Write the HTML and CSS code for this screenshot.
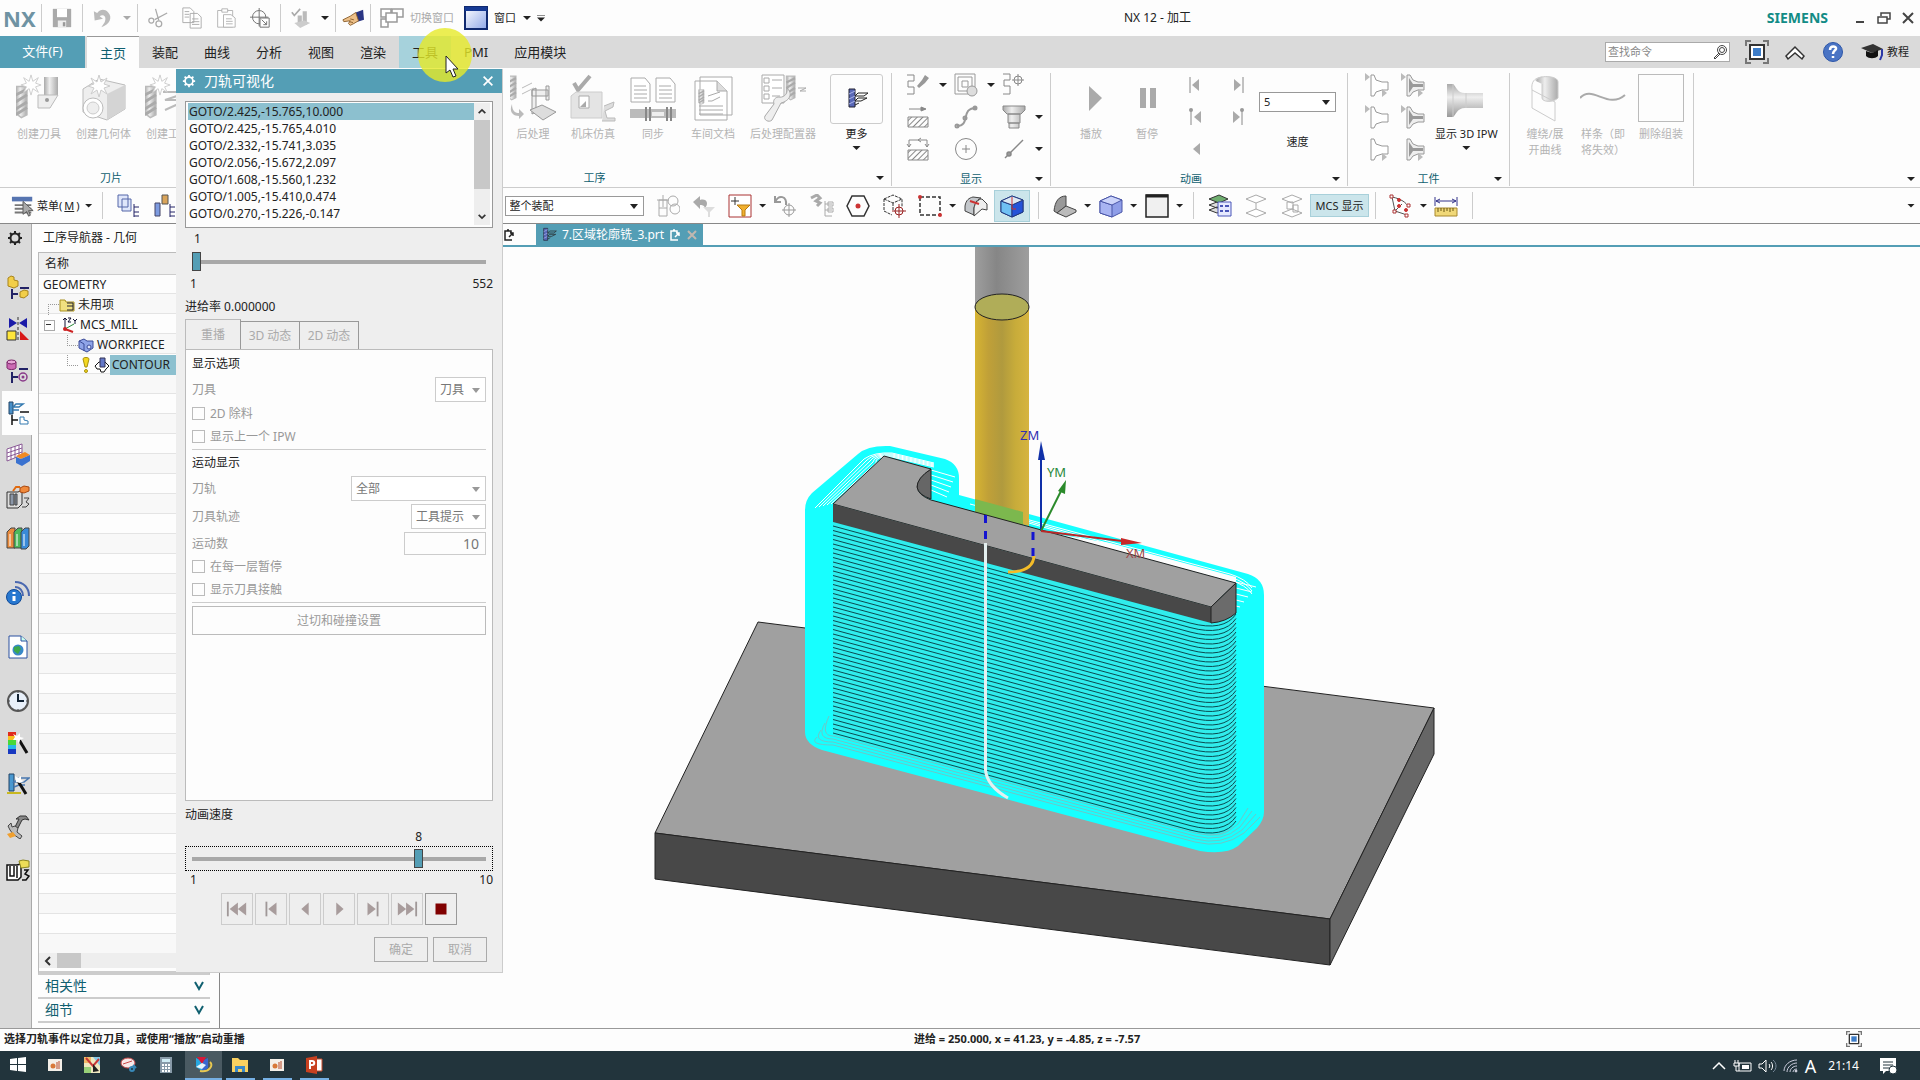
FILE: index.html
```html
<!DOCTYPE html>
<html lang="zh-CN">
<head>
    <meta charset="UTF-8">
    <meta name="viewport" content="width=device-width, initial-scale=1.0">
    <title>NX 12 - 加工</title>
    <link rel="stylesheet" href="styles.css">
</head>
<body>
    <!-- shared symbols -->
    <svg class="defs" aria-hidden="true">
        <defs>
            <linearGradient id="gMetal" x1="0" x2="1" y1="0" y2="0"><stop offset="0" stop-color="#aaa"/><stop offset=".4" stop-color="#eee"/><stop offset="1" stop-color="#aaa"/></linearGradient>
            <linearGradient id="gMetalV" x1="0" x2="0" y1="0" y2="1"><stop offset="0" stop-color="#aaa"/><stop offset=".4" stop-color="#eee"/><stop offset="1" stop-color="#999"/></linearGradient>
            <linearGradient id="gBlue" x1="0" x2="1" y1="0" y2="1"><stop offset="0" stop-color="#fff"/><stop offset="1" stop-color="#8fa8e8"/></linearGradient>
            <pattern id="hatch" width="4" height="4" patternUnits="userSpaceOnUse" patternTransform="rotate(45)"><path d="M0 0V4" stroke="#888" stroke-width="2"/></pattern>
        </defs>
        <symbol id="part" viewBox="0 0 24 24"><path d="M3 2h3l2 5 6 2h6v8h-6l-6 2-2 4H3z" fill="#fff" stroke="#999"/></symbol>
        <symbol id="partFill" viewBox="0 0 24 24"><path d="M3 2h3l3 5 5 2h6v8h-6l-5 2-3 4H3z" fill="#eee" stroke="#999"/><path d="M5 5l4 6h10v3H9l-4 6z" fill="#999"/></symbol>
        <symbol id="mark" viewBox="0 0 24 24"><path d="M0 0l5 4-5 4z" fill="#bbb"/></symbol>
        <symbol id="cutter" viewBox="0 0 24 24"><path d="M4 2h6v18H4z" fill="#5968b8" stroke="#223"/><path d="M4 7l6-3M4 12l6-3M4 17l6-3" stroke="#aab4ea"/><path d="M10 9l3-3h10l-4 3h-9M10 14l3-3h9l-6 3h-6M10 18l4-2" fill="none" stroke="#222"/></symbol>
        <symbol id="mill" viewBox="0 0 24 24"><path d="M4 1h8v20l-4 2-4-3z" fill="url(#gMetal)" stroke="#bbb"/><path d="M4 7l8-4M4 12l8-5M4 17l8-5M4 21l8-5" stroke="#aaa" stroke-width="2"/></symbol>
        <symbol id="burst" viewBox="0 0 24 24"><path d="M12 1l2 7 6-4-3 6 6 2-6 2 3 6-6-4-2 7-2-7-6 4 3-6-6-2 6-2-3-6 6 4z" fill="#fff" stroke="#ccc"/></symbol>
        <symbol id="gear" viewBox="0 0 16 16"><circle cx="8" cy="8" r="4.500" fill="none" stroke="currentColor" stroke-width="2"/><path d="M8 1v3M8 12v3M1 8h3M12 8h3M3 3l2 2M11 11l2 2M13 3l-2 2M5 11l-2 2" stroke="currentColor" stroke-width="2"/></symbol>
        <symbol id="fit" viewBox="0 0 24 24"><path d="M1 6V1h5M18 1h5v5M23 18v5h-5M6 23H1v-5" fill="none" stroke="#777" stroke-width="2"/><path d="M5 5h14v14H5z" fill="#fff" stroke="#333" stroke-width="2"/><path d="M8 8h8v8H8z" fill="#3c7cc8"/></symbol>
        <symbol id="detach" viewBox="0 0 12 14"><path d="M8 5V3H2v9h7M4 2h2M6 9l4-4M7 5h3v3" fill="none" stroke="currentColor" stroke-width="1.500"/></symbol>
    </svg>

    <header class="titlebar">
        <span class="nx">NX</span>
        <span class="sep"></span>
        <button aria-label="保存"><svg viewBox="0 0 24 24"><path d="M1 1h22v22H1z" fill="#aaa"/><path d="M6 1h12v10H6z" fill="#fff"/><path d="M7 15h10v8H7z" fill="#eee"/><path d="M13 17h3v5h-3z" fill="#999"/></svg></button>
        <span class="sep"></span>
        <button aria-label="撤消"><svg viewBox="0 0 24 24"><path d="M1 4l1 11 10-2-4-3c4-3 9 0 6 7l-4 6c10-3 14-12 8-18-4-4-9-4-13 1z" fill="#bbb"/></svg></button>
        <i class="dd grey"></i>
        <span class="sep"></span>
        <button aria-label="剪切"><svg viewBox="0 0 24 24" fill="none" stroke="#aaa" stroke-width="1.500"><path d="M9 1l4 14M23 6L8 14"/><circle cx="4" cy="15" r="3"/><circle cx="13" cy="19" r="3.500"/></svg></button>
        <button class="wide" aria-label="复制"><svg viewBox="0 0 24 24" fill="#fff" stroke="#aaa"><path d="M2 1h8l4 4v12H2zM10 7h8l4 4v12H10z"/><path d="M4 5h5M4 8h5M4 11h5M12 13h7M12 16h8M12 19h8"/></svg></button>
        <button aria-label="粘贴"><svg viewBox="0 0 24 24" fill="#fff" stroke="#aaa"><path d="M2 3h18v20H2z"/><path d="M7 1h7v4H7zM9 8h9l5 4v11H9z"/><path d="M12 13h7M12 16h8M12 19h8"/></svg></button>
        <button aria-label="定向"><svg viewBox="0 0 24 24" fill="none" stroke="#777" stroke-width="1.200"><circle cx="11" cy="11" r="8"/><path d="M11 0v22M0 11h22"/><path d="M12 12h11v11H12z" fill="#fff"/><path d="M14 14l6 6M20 16v4h-4"/></svg></button>
        <span class="sep"></span>
        <button aria-label="完成"><svg viewBox="0 0 24 24"><path d="M1 5l3 4 7-8" fill="none" stroke="#aaa" stroke-width="2"/><path d="M8 9h5v12H8zM14 4h5v16h-5z" fill="#bbb"/><path d="M4 18l12-3 7 3-12 6z" fill="#ccc"/></svg></button>
        <i class="dd"></i>
        <span class="sep"></span>
        <button class="hand" aria-label="触控"><svg viewBox="0 0 24 24"><path d="M15 6l8-3 1 11-7 2z" fill="#2a3584"/><path d="M1 14l8-4 6-4 3 9-5 3-4 2-2-2 2-3-7 1z" fill="#edc088" stroke="#8a5e2c"/><path d="M9 13l4 1M8 16l4 1" stroke="#8a5e2c"/></svg></button>
        <span class="sep"></span>
        <button class="text grey"><svg viewBox="0 0 24 24" fill="#fff" stroke="#999" stroke-width="1.500"><path d="M1 3h10v8H1zM1 13h7v8H1z"/><path d="M12 3h11v8H12z"/><path d="M6 7h11v9H6z"/></svg>切换窗口</button>
        <button class="text"><svg viewBox="0 0 24 24"><path d="M1 1h22v22H1z" fill="url(#gBlue)" stroke="#102a70" stroke-width="2"/><path d="M1 1h22v4H1z" fill="#163a94"/></svg>窗口</button>
        <i class="dd"></i>
        <i class="dd bar"></i>
        <h1>NX 12 - 加工</h1>
        <span class="siemens">SIEMENS</span>
        <button class="win" aria-label="最小化"><svg viewBox="0 0 16 16"><path d="M4 12h8" stroke="#444" stroke-width="2"/></svg></button>
        <button class="win" aria-label="还原"><svg viewBox="0 0 16 16" fill="none" stroke="#444" stroke-width="1.500"><path d="M5 6V3h9v6h-3M2 7h9v6H2z"/></svg></button>
        <button class="win" aria-label="关闭"><svg viewBox="0 0 16 16"><path d="M3 3l10 10M13 3L3 13" stroke="#444" stroke-width="2"/></svg></button>
    </header>

    <nav class="tabs">
        <a class="file" href="#">文件(F)</a>
        <a class="active" href="#">主页</a>
        <a href="#">装配</a>
        <a href="#">曲线</a>
        <a href="#">分析</a>
        <a href="#">视图</a>
        <a href="#">渲染</a>
        <a class="hover" href="#">工具</a>
        <a href="#">PMI</a>
        <a href="#">应用模块</a>
        <label class="search">
            <input type="text" placeholder="查找命令" aria-label="查找命令">
            <svg viewBox="0 0 16 16" fill="none" stroke="#444"><circle cx="10" cy="6" r="4.500"/><circle cx="10" cy="6" r="2.500"/><path d="M7 9l-5 5 1 1 5-5"/></svg>
        </label>
        <button aria-label="全屏"><svg viewBox="0 0 24 24"><use href="#fit"/></svg></button>
        <button aria-label="收起功能区"><svg viewBox="0 0 24 24"><path d="M3 16l9-9 9 9-2 3-7-6-7 6z" fill="#fff" stroke="#333" stroke-width="1.500"/></svg></button>
        <button aria-label="帮助"><svg viewBox="0 0 24 24"><circle cx="12" cy="12" r="9.500" fill="#4a74c4" stroke="#2d56a8"/><path d="M9 10c0-5 7-4 6-1-1 2-3 2-3 5M12 16v2" fill="none" stroke="#fff" stroke-width="2.500"/></svg></button>
        <button class="tutor"><svg viewBox="0 0 24 24"><path d="M1 8l12-4 10 5-11 4z" fill="#333"/><path d="M6 11v5c3 3 9 3 12 0v-6l-6 3z" fill="#111"/><path d="M22 9v6l-2 5" fill="none" stroke="#2b38a8" stroke-width="2"/></svg>教程</button>
    </nav>

    <section class="ribbon">
        <div class="group insert">
            <div class="items">
                <button class="big" disabled><svg viewBox="0 0 46 48"><path d="M28 3h14v18H28z" fill="url(#gMetal)"/><path d="M22 21h20l-8 13H22z" fill="#eee" stroke="#bbb"/><circle cx="31" cy="26" r="2" fill="#999"/><use href="#mill" x="-6" y="10" width="34" height="36"/><use href="#burst" x="2" y="0" width="26" height="22"/></svg>创建刀具</button>
                <button class="big" disabled><svg viewBox="0 0 46 48"><path d="M2 15l16-10 26 6v24L26 46 2 38z" fill="#eee" stroke="#bbb"/><path d="M26 20l18-9v24L26 46z" fill="#d4d4d4"/><circle cx="12" cy="34" r="10" fill="#fff" stroke="#bbb"/><circle cx="12" cy="34" r="6" fill="#eee" stroke="#ccc"/><use href="#burst" x="4" y="0" width="28" height="24"/></svg>创建几何体</button>
                <button class="big" disabled><svg viewBox="0 0 46 48"><use href="#mill" x="-6" y="10" width="34" height="36"/><path d="M18 18h26l-24 8h22l-22 10" fill="none" stroke="#bbb" stroke-width="2"/><use href="#burst" x="2" y="0" width="26" height="22"/></svg>创建工序</button>
            </div>
            <div class="foot"><span>刀片</span></div>
        </div>
        <div class="group operation">
            <div class="items">
                <button class="big" disabled><svg viewBox="0 0 46 48"><use href="#mill" x="-7" y="0" width="26" height="28"/><path d="M12 14l10-5M12 20l12-6" stroke="#bbb"/><path d="M22 16l4-2v24l-4 2zM22 16h16v6H22zM36 12h3v14h-3z" fill="#eee" stroke="#999"/><path d="M20 36l12-5 14 7-13 8z" fill="#ddd" stroke="#999"/><path d="M2 30c0 8 4 9 7 9v-4l5 5-5 5v-3c-7 0-10-5-7-12z" fill="#bbb"/></svg>后处理</button>
                <button class="big" disabled><svg viewBox="0 0 46 48"><path d="M4 9l4 7L20 2" fill="none" stroke="#aaa" stroke-width="4"/><path d="M1 22l5-4h26v26H1z" fill="#e4e4e4" stroke="#ccc"/><path d="M9 22h10v12H9z" fill="#fff" stroke="#aaa"/><path d="M10 33l6-6v6z" fill="#aaa"/><path d="M34 32l10-4-1 5-8 4 2 7h8v3H32" fill="#ddd" stroke="#bbb"/></svg>机床仿真</button>
                <button class="big" disabled><svg viewBox="0 0 46 48" fill="#fff" stroke="#aaa"><path d="M1 4h14l5 6v18H1zM26 4h14l5 6v18H26z"/><path d="M4 12h12M4 16h13M4 20h13M4 24h13M29 12h12M29 16h13M29 20h13M29 24h13"/><path d="M0 35h46v9H0z" fill="#bbb" stroke="none"/><path d="M16 33v14M20 33v14M37 33v14M41 33v14" stroke="#888" stroke-width="2"/><path d="M22 38h12v4H22z" fill="#eee" stroke="none"/></svg>同步</button>
                <button class="big" disabled><svg viewBox="0 0 46 48" fill="#fff" stroke="#aaa"><path d="M10 3h32v38H10zM5 7h22l10 10v29H5z"/><path d="M27 7v10h10" fill="#ddd"/><use href="#mill" x="6" y="13" width="16" height="20"/><path d="M18 22l12-4M18 27h4l8-4M9 32h24M9 36h24M9 40h24"/></svg>车间文档</button>
                <button class="big" disabled><svg viewBox="0 0 46 48" fill="#fff" stroke="#aaa"><path d="M2 1h22v28H2zM4 4h5v5H4zM4 12h5v5H4zM4 20h5v5H4zM12 6h10M12 14h10M12 22h8"/><use href="#mill" x="22" y="0" width="26" height="28"/><path d="M38 14h8l-6 3h6"/><path d="M18 23c5 1 10-2 9-9 8 8-1 14-6 15L12 46c-3 3-9 0-7-4l9-12c-1-3 0-6 4-7z" fill="#eee"/></svg>后处理配置器</button>
                <button class="big more"><span class="box"><svg viewBox="0 0 24 24"><use href="#cutter"/></svg></span>更多<i class="dd"></i></button>
            </div>
            <div class="foot"><span>工序</span><i class="dd"></i></div>
        </div>
        <div class="group display">
            <div class="items grid3">
                <button aria-label="编辑显示"><svg viewBox="0 0 24 24"><path d="M1 2h7v6H2v6h6v7H1" fill="none" stroke="#888"/><path d="M11 13l5-6 3-5 4 3-4 5-6 5z" fill="#999"/></svg><i class="dd"></i></button>
                <button aria-label="颜色"><svg viewBox="0 0 24 24" fill="none" stroke="#999"><path d="M1 1h20v20H1zM4 4h14v14H4zM8 8h6v6H8z"/><circle cx="18" cy="18" r="5" fill="#ddd"/></svg><i class="dd"></i></button>
                <button aria-label="刀轨点"><svg viewBox="0 0 24 24" fill="none" stroke="#888"><path d="M1 1h7v6H2v6h6v8H1"/><circle cx="16" cy="7" r="4"/><path d="M16 1v12M10 7h12"/></svg></button>
                <button aria-label="切削"><svg viewBox="0 0 24 24" stroke="#888"><path d="M2 12h20v10H2z" fill="url(#hatch)"/><path d="M3 4h16M15 2l5 2-5 2z" fill="#888"/></svg></button>
                <button aria-label="样条"><svg viewBox="0 0 24 24" fill="none" stroke="#999" stroke-width="2"><path d="M3 21c14 0 3-18 19-18"/><circle cx="3" cy="21" r="1.500"/><circle cx="11" cy="13" r="1.500"/><circle cx="21" cy="3" r="1.500"/></svg></button>
                <button aria-label="夹持器"><svg viewBox="0 0 24 24" stroke="#888" fill="url(#gMetal)"><path d="M1 1h22v4l-4 4H5L1 5zM6 9h12v9H6zM7 18h10v5H7z"/></svg><i class="dd"></i></button>
                <button aria-label="移刀"><svg viewBox="0 0 24 24" stroke="#888"><path d="M2 13h20v10H2z" fill="url(#hatch)"/><path d="M3 10V3h18v7M1 7l2 3 2-3M19 7l2 3 2-3M15 1l-3 2 3 2" fill="none"/></svg></button>
                <button aria-label="圆心"><svg viewBox="0 0 24 24" fill="none" stroke="#888"><circle cx="12" cy="12" r="10.500"/><path d="M12 8v8M8 12h8"/></svg></button>
                <button aria-label="直线"><svg viewBox="0 0 24 24" stroke="#888" stroke-width="1.500"><path d="M3 21L21 3"/><circle cx="7" cy="17" r="2" fill="#999"/></svg><i class="dd"></i></button>
            </div>
            <div class="foot"><span>显示</span><i class="dd"></i></div>
        </div>
        <div class="group animate">
            <div class="items">
                <button class="big mid" disabled><svg viewBox="0 0 46 48"><path d="M21 12l13 12-13 13z" fill="#aaa"/></svg>播放</button>
                <button class="big mid" disabled><svg viewBox="0 0 46 48"><path d="M16 14h6v20h-6zM26 14h6v20h-6z" fill="#aaa"/></svg>暂停</button>
                <div class="grid2">
                    <button aria-label="首步"><svg viewBox="0 0 24 24"><path d="M6 4v16" stroke="#888"/><path d="M15 6v12l-7-6z" fill="#aaa"/></svg></button>
                    <button aria-label="末步"><svg viewBox="0 0 24 24"><path d="M17 4v16" stroke="#888"/><path d="M8 6v12l7-6z" fill="#aaa"/></svg></button>
                    <button aria-label="上一工序"><svg viewBox="0 0 24 24"><path d="M7 4v16" stroke="#888"/><circle cx="7" cy="5" r="2" fill="#999"/><path d="M17 6v12l-7-6z" fill="#aaa"/></svg></button>
                    <button aria-label="下一工序"><svg viewBox="0 0 24 24"><path d="M16 4v16" stroke="#888"/><circle cx="16" cy="5" r="2" fill="#999"/><path d="M7 6v12l7-6z" fill="#aaa"/></svg></button>
                    <button aria-label="后退"><svg viewBox="0 0 24 24"><path d="M16 6v12l-7-6z" fill="#aaa"/></svg></button>
                </div>
                <div class="speed">
                    <span class="pick"><select id="speed"><option>5</option></select></span>
                    <label for="speed">速度</label>
                </div>
            </div>
            <div class="foot"><span>动画</span><i class="dd"></i></div>
        </div>
        <div class="group piece">
            <div class="items">
                <div class="grid2 narrow">
                    <button aria-label="工件一"><svg viewBox="0 0 24 24"><use href="#part" x="3"/><use href="#mark"/><use href="#mark" x="17" y="16"/></svg></button>
                    <button aria-label="工件二"><svg viewBox="0 0 24 24"><use href="#partFill" x="3"/><use href="#mark"/><use href="#mark" x="17" y="16"/></svg></button>
                    <button aria-label="工件三"><svg viewBox="0 0 24 24"><use href="#part" x="3"/><use href="#mark"/></svg></button>
                    <button aria-label="工件四"><svg viewBox="0 0 24 24"><use href="#partFill" x="3"/><use href="#mark"/></svg></button>
                    <button aria-label="工件五"><svg viewBox="0 0 24 24"><use href="#part" x="3"/><use href="#mark" x="17" y="16"/></svg></button>
                    <button aria-label="工件六"><svg viewBox="0 0 24 24"><use href="#partFill" x="3"/><use href="#mark" x="17" y="16"/></svg></button>
                </div>
                <button class="big ipw"><svg viewBox="0 0 46 48" fill="url(#gMetalV)"><path d="M4 10h6c3 2 4 9 12 9h18v15H22c-8 0-9 7-12 9H4z"/><path d="M10 10v33M23 19v15" stroke="#ccc"/></svg>显示 3D IPW<i class="dd"></i></button>
            </div>
            <div class="foot"><span>工件</span><i class="dd"></i></div>
        </div>
        <div class="group curves">
            <div class="items">
                <button class="big" disabled><svg viewBox="0 0 46 48" stroke="#ccc"><path d="M14 7c0-6 22-6 22 1v16c-5 5-16 4-16 0V10" fill="url(#gMetal)"/><path d="M20 3c-8 1-11 5-10 13v18l23 13V28L10 16" fill="none"/></svg>缠绕/展<br>开曲线</button>
                <button class="big" disabled><svg viewBox="0 0 46 48"><path d="M0 24C12 10 28 36 45 21" fill="none" stroke="#aaa" stroke-width="2"/></svg>样条（即<br>将失效）</button>
                <button class="big" disabled><span class="blank"></span>删除组装</button>
            </div>
        </div>
        <i class="dd last"></i>
    </section>

    <section class="toolbar">
        <button class="menu"><svg viewBox="0 0 26 24"><path d="M1 2h22v5H1z" fill="#5674b0"/><path d="M4 11h18M4 15h18M4 19h18" stroke="#777" stroke-width="2"/><path d="M13 7v14l4-3 2 5 2-1-2-5h5z" fill="#aaa" stroke="#555"/></svg>菜单(<u>M</u>)</button>
        <i class="dd"></i>
        <span class="sep"></span>
        <button aria-label="程序顺序视图"><svg viewBox="0 0 24 24" fill="#dfe6fa" stroke="#5566a8"><path d="M1 1h10v12H1zM5 5h9v12H5z"/><path d="M17 10v13M17 13h5M17 18h5M17 22h5" stroke="#226"/></svg></button>
        <button aria-label="机床视图"><svg viewBox="0 0 24 24"><path d="M9 1h6v9H9z" fill="#d9a45a" stroke="#555"/><path d="M2 9h5v13H2z" fill="#7d9be0" stroke="#446"/><path d="M17 10v13M17 13h5M17 18h5M17 22h5" stroke="#226" fill="none"/></svg></button>
        <span class="covered"></span>
        <span class="pick scope"><select aria-label="选择范围"><option>整个装配</option></select></span>
        <button aria-label="装配内"><svg viewBox="0 0 24 24" fill="none" stroke="#aaa"><path d="M3 6h8v16H3zM3 14h8M7 1v12M1 6h12"/><circle cx="17" cy="7" r="5"/><circle cx="19" cy="15" r="5"/></svg></button>
        <button aria-label="重置过滤器"><svg viewBox="0 0 24 24"><path d="M1 8l7-6v4c7-2 9 4 5 8-1-3-3-3-5-3v4z" fill="#aaa"/><path d="M11 13h12l-5 5v5h-2v-5z" fill="#ddd"/></svg></button>
        <button aria-label="过滤器"><svg viewBox="0 0 24 24"><path d="M1 1h22v22H1z" fill="#fff" stroke="#a33"/><path d="M7 3v8M3 7h8" stroke="#333"/><path d="M9 11h13l-5 5v6h-3v-6z" fill="#f0b030" stroke="#b87a10"/></svg></button>
        <i class="dd"></i>
        <button aria-label="恢复点"><svg viewBox="0 0 24 24" fill="none" stroke="#999"><path d="M1 2v6h6M1 8c4-8 12-6 11 3" stroke-width="2"/><circle cx="15" cy="16" r="5"/><path d="M15 9v14M8 16h14"/></svg></button>
        <button aria-label="层次"><svg viewBox="0 0 24 24"><path d="M1 4l6-3 3 3-4 3 4 2-3 3" fill="none" stroke="#aaa" stroke-width="3"/><path d="M15 7v15M15 10h7M15 16h7M15 22h7M18 8h5v4h-5zM18 14h5v4h-5z" fill="#fff" stroke="#aaa"/></svg></button>
        <button aria-label="多边形"><svg viewBox="0 0 24 24"><path d="M6 2h12l5 10-5 10H6L1 12z" fill="none" stroke="#333" stroke-width="1.500"/><circle cx="12" cy="12" r="2.500" fill="#c33"/></svg></button>
        <button aria-label="体中心"><svg viewBox="0 0 24 24" fill="none"><path d="M2 5l9-4 9 4v8M2 5v12l8 4M2 5l9 4 9-4M11 9v8" stroke="#333" stroke-dasharray="3 1"/><circle cx="17" cy="17" r="4" stroke="#922"/><path d="M17 10v14M10 17h14" stroke="#922"/></svg></button>
        <button aria-label="矩形选择"><svg viewBox="0 0 24 24"><path d="M2 3h20v18H2z" fill="none" stroke="#333" stroke-width="1.500" stroke-dasharray="4 2"/><circle cx="2" cy="3" r="2" fill="#c33"/><circle cx="22" cy="21" r="2" fill="#c33"/></svg></button>
        <i class="dd"></i>
        <button aria-label="面规则"><svg viewBox="0 0 24 24" stroke="#444"><path d="M1 12c1-6 4-8 8-9l8 1c-5 2-6 6-7 10v7l-9-4z" fill="#c4c8cc"/><path d="M10 14c1-5 4-9 8-9l5 5v6l-5-1-8 7z" fill="#eee"/><path d="M6 7l9 3" stroke="#c33" stroke-width="2"/></svg></button>
        <button class="on" aria-label="着色"><svg viewBox="0 0 24 24" stroke="#223a80"><path d="M1 7l11-5 11 4v12l-11 5-11-5z" fill="#5b9cf0"/><path d="M1 7l11 4v12L1 18z" fill="#6fc0f4"/><path d="M12 11l11-5v12l-11 5z" fill="#2453d8"/><path d="M1 7l11-5 11 4-11 5z" fill="#dce8f4"/><path d="M12 3v12h4" fill="none" stroke="#c33"/></svg></button>
        <span class="sep"></span>
        <button aria-label="截面"><svg viewBox="0 0 24 24" stroke="#444"><path d="M1 17C2 7 6 2 13 2v10l-9 7z" fill="#999"/><path d="M4 19l9-7 10 4v2l-10 5z" fill="#bbb"/></svg></button>
        <i class="dd"></i>
        <button aria-label="渲染样式"><svg viewBox="0 0 24 24" stroke="#4a56a8"><path d="M1 7l11-5 11 4v12l-10 5-12-4z" fill="#8f9ee8"/><path d="M1 7l12 4v12L1 19z" fill="#a8b4f2"/><path d="M1 7l11-5 11 4-10 5z" fill="#ccd4fa"/></svg></button>
        <i class="dd"></i>
        <button aria-label="背景"><svg viewBox="0 0 24 24"><path d="M1 1h22v22H1z" fill="#f0f0f0" stroke="#222" stroke-width="1.500"/><path d="M1 2h22" stroke="#222" stroke-width="3"/></svg></button>
        <i class="dd"></i>
        <span class="sep"></span>
        <button aria-label="图层设置"><svg viewBox="0 0 24 24" stroke="#333"><path d="M1 16l8-3 8 3-8 3zM1 11l8-3 8 3-8 3z" fill="#ddd"/><path d="M1 5l10-4 9 4-9 4z" fill="#6fae6f"/><path d="M10 8h13v14H10z" fill="#e6eaff" stroke="#4a56b8"/><path d="M12 12h3M17 12h4M12 17h3M17 17h4" stroke="#4a56b8" stroke-width="2"/></svg></button>
        <button aria-label="图层视图"><svg viewBox="0 0 24 24" fill="#fff" stroke="#aaa"><path d="M2 5l10-4 10 4-10 4zM2 19l10-4 10 4-10 4zM12 9v6"/></svg></button>
        <button aria-label="移动至图层"><svg viewBox="0 0 24 24" fill="#fff" stroke="#aaa"><path d="M2 5l10-4 10 4-10 4zM2 19l10-4 10 4-10 4zM7 8h6v7H7zM13 11h5v7h-5z"/></svg></button>
        <button class="mcs">MCS 显示</button>
        <span class="sep"></span>
        <button aria-label="编辑点"><svg viewBox="0 0 24 24" fill="none" stroke="#c33"><path d="M4 3c10 2 14 6 16 9M4 3l3 14 12 4M7 17l7-7" stroke="#555"/><g fill="#fff" stroke="#a33"><path d="M2 1h3v3H2zM5 16h3v3H5zM19 10h3v3h-3zM17 20h3v3h-3z"/></g><g fill="#c33"><circle cx="11" cy="6" r="1.500"/><circle cx="11" cy="12" r="1.500"/><circle cx="18" cy="16" r="1.500"/></g></svg></button>
        <i class="dd"></i>
        <button aria-label="测量"><svg viewBox="0 0 24 24"><path d="M1 3v9M23 3v9M2 7h20M6 5L2 7l4 2M18 5l4 2-4 2" fill="none" stroke="#33338a"/><path d="M1 14h22v8H1z" fill="#f0d878" stroke="#a8882c"/><path d="M4 14v4M7 14v3M10 14v4M13 14v3M16 14v4M19 14v3" stroke="#665510"/></svg></button>
        <span class="sep"></span>
        <i class="dd last"></i>
    </section>

    <main>
        <aside class="resbar">
            <button class="gear" aria-label="资源条选项"><svg viewBox="0 0 16 16"><use href="#gear"/></svg></button>
            <button class="spaced" aria-label="装配导航器"><svg viewBox="0 0 24 24"><path d="M2 3l3-2 3 1v3l4 1v5l-4 2-6-2z" fill="#f2ce48" stroke="#a8841c"/><path d="M14 17l4-2 4 1v4l-4 3-4-1z" fill="#f2ce48" stroke="#a8841c"/><path d="M6 14v10M6 19h6M14 13h9" stroke="#226" stroke-width="2"/></svg></button>
            <button aria-label="约束导航器"><svg viewBox="0 0 24 24"><path d="M3 1v10l8-5zM21 1v10l-8-5z" fill="#1b1ba8"/><path d="M1 14h9v9H1z" fill="#ffe63c" stroke="#333"/><path d="M14 14l9 9h-9z" fill="#d81818"/><path d="M12 0v24" stroke="#333" stroke-dasharray="3 2"/></svg></button>
            <button aria-label="部件导航器"><svg viewBox="0 0 24 24"><path d="M1 3v6c1 2 8 2 9 0V3z" fill="#cc6ab4" stroke="#7a2468"/><ellipse cx="5.500" cy="3" rx="4.500" ry="2" fill="#e8a8d8" stroke="#7a2468"/><path d="M6 13v11M6 18h6M13 10h9" stroke="#226" stroke-width="2"/><circle cx="17" cy="18" r="4" fill="none" stroke="#8a3a8a" stroke-width="1.500"/><circle cx="17" cy="18" r="1.500" fill="#8a3a8a"/></svg></button>
            <button class="current" aria-label="工序导航器"><svg viewBox="0 0 24 24"><path d="M3 1h4v12H3z" fill="#4a90c8" stroke="#246"/><path d="M7 6l3-3h7l-4 3zM7 9h6" stroke="#357ab0" fill="none" stroke-width="1.500"/><path d="M6 14v10M6 19h6M14 11h9" stroke="#111" stroke-width="1.500"/><path d="M14 16h4v3l4 1v3h-8z" fill="#fff" stroke="#357ab0"/></svg></button>
            <button aria-label="机床导航器"><svg viewBox="0 0 24 24"><path d="M1 6l15-5v11L1 18zM1 10l15-5M1 14l15-5M5 5v12M9 3v12M13 2v11" fill="#fff" stroke="#8a5a96"/><path d="M10 13l9-4 5 3-9 4z" fill="#f08a24"/><path d="M10 14l5 2 9-4v6l-8 5-6-3z" fill="#3a72d0"/></svg></button>
            <button aria-label="加工特征导航器"><svg viewBox="0 0 24 24"><path d="M1 7h11l4-2v14l-4 4H1z" fill="#ddd" stroke="#333"/><path d="M4 9h4v11H4zM9 9h2v11H9z" fill="#8a96a8" stroke="#444"/><path d="M14 3l4-2 5 1v4l-5 2-4-1z" fill="#f08a3c" stroke="#a84810"/><path d="M7 6l3-4h4" fill="none" stroke="#e06a10" stroke-width="2"/><path d="M18 13h5l-3 4 3 2-3 3h-4" fill="none" stroke="#444"/></svg></button>
            <button aria-label="重用库"><svg viewBox="0 0 24 24" stroke="#444"><path d="M1 5l4-4h4v20H1z" fill="#e88a3c"/><path d="M8 5l4-4h4v20H8z" fill="#4cb85c"/><path d="M15 5l4-4h4v18l-3 3h-5z" fill="#3a8ad8"/><path d="M4 7v12M11 7v12M18 7v12" stroke="#fff"/></svg></button>
            <button class="spaced" aria-label="信息"><svg viewBox="0 0 24 24"><circle cx="8" cy="16" r="7.500" fill="#2878d0" stroke="#104a98"/><path d="M8 11v2M8 15v5" stroke="#fff" stroke-width="3"/><path d="M9 6c5 0 8 4 8 9M9 1c9 0 14 6 14 14" fill="none" stroke="#4a68b0" stroke-width="2"/></svg></button>
            <button class="spaced" aria-label="网页"><svg viewBox="0 0 24 24"><path d="M3 1h12l6 5v17H3z" fill="#fff" stroke="#2a50a0"/><path d="M15 1v5h6" fill="#cfe" stroke="#2a50a0"/><circle cx="12" cy="15" r="5.500" fill="#3888c8"/><path d="M8 12l5-1 2 3-3 5-4-3z" fill="#3ca84c"/></svg></button>
            <button class="spaced" aria-label="历史记录"><svg viewBox="0 0 24 24"><circle cx="12" cy="12" r="10" fill="#e8f0fa" stroke="#555" stroke-width="2"/><path d="M12 5v7h6" fill="none" stroke="#123" stroke-width="2"/><path d="M12 3v1M12 20v1M3 12h1M20 12h1" stroke="#333"/></svg></button>
            <button aria-label="系统材料"><svg viewBox="0 0 24 24"><path d="M2 1h8v4H2z" fill="#e02c1c"/><path d="M2 5h8v4H2z" fill="#f8c020"/><path d="M2 9h8v5H2z" fill="#48d838"/><path d="M2 14h8v4H2z" fill="#28b8e8"/><path d="M2 18h8v5H2z" fill="#1838c0"/><path d="M12 7l9 15" stroke="#111" stroke-width="3"/><path d="M7 3l4 2 3-3v4l4 1-4 2-1 4-2-4-4 0 2-3z" fill="#fff"/></svg></button>
            <button aria-label="加工向导"><svg viewBox="0 0 24 24"><path d="M3 1h5v17H3z" fill="#4a98d0" stroke="#246"/><path d="M8 9l5-4h10l-5 4zM8 14l5-2h6" fill="none" stroke="#4a78b0" stroke-width="1.500"/><path d="M1 20h14" stroke="#c8b820" stroke-width="2"/><path d="M12 8l8 13" stroke="#111" stroke-width="3"/><path d="M9 3l3 2 3-2v4l3 1-4 2-4-1z" fill="#fff"/></svg></button>
            <button aria-label="工具"><svg viewBox="0 0 24 24"><path d="M10 4l4-3h6l3 4-4-1-3 1-4 8-3-1 4-8z" fill="#888" stroke="#333"/><path d="M5 8l1 4 3-1 3 2-1 4 5 4-2 3-7-5-3-4-2-4z" fill="#bbb" stroke="#444"/><path d="M1 19l6-2 3 4-6 2z" fill="#f0a030"/></svg></button>
            <button aria-label="机床库"><svg viewBox="0 0 24 24"><path d="M1 8h10l4-1v13l-3 3H1z" fill="#fff" stroke="#111" stroke-width="1.500"/><path d="M4 9v10h4V9M11 9v12" fill="none" stroke="#111" stroke-width="1.500"/><path d="M13 4l4-1 6 1v6l-8 1z" fill="#ecdc58" stroke="#8a8420"/><path d="M18 13h4l-3 4 4 2-3 4h-4" fill="none" stroke="#111" stroke-width="1.500"/></svg></button>
        </aside>

        <section class="navigator">
            <h2>工序导航器 - 几何</h2>
            <div class="tree">
                <table>
                    <thead><tr><th>名称</th></tr></thead>
                    <tbody>
                        <tr><td>GEOMETRY</td></tr>
                        <tr><td class="lv1"><svg viewBox="0 0 16 16"><path d="M1 3h5l1 2h8v9H1z" fill="#f0e080" stroke="#a89020"/><path d="M8 6h6v7H8M8 9h6" fill="none" stroke="#223" /></svg>未用项</td></tr>
                        <tr><td class="lv1 open"><svg viewBox="0 0 16 16"><path d="M4 12V1M2 3l2-2 2 2" fill="none" stroke="#113"/><path d="M4 12l9-5" stroke="#2a8a3a"/><path d="M4 12l8 3" stroke="#c22" stroke-width="2"/><path d="M7 1h3L7 5h3M12 2l2 2 2-2M14 4v3" stroke="#113" fill="none"/><circle cx="4" cy="12" r="2" fill="#c22"/></svg>MCS_MILL</td></tr>
                        <tr><td class="lv2"><svg viewBox="0 0 16 16" stroke="#3a4a98"><path d="M1 4l5-2 3 2 6 0v7l-6 4-8-4z" fill="#8fa4e8"/><path d="M1 4l5 3v7" fill="none"/><circle cx="11" cy="10" r="2" fill="#dde4fa"/></svg>WORKPIECE</td></tr>
                        <tr><td class="lv2 sel"><svg class="bang" viewBox="0 0 8 16"><path d="M1 2c0-2 6-2 6 0L5 10H3z" fill="#f4d820" stroke="#a89010"/><circle cx="4" cy="14" r="1.500" fill="#f4d820" stroke="#a89010"/></svg><svg viewBox="0 0 16 16"><path d="M1 9l4-4h6l4 4-3 3-2 3H7l-1-3H3z" fill="#fff" stroke="#111"/><path d="M6 1h5v9H6z" fill="#6478c8" stroke="#335"/></svg><span>CONTOUR</span></td></tr>
                    </tbody>
                </table>
                <div class="hscroll"><svg viewBox="0 0 12 12"><path d="M8 2L4 6l4 4" fill="none" stroke="#333" stroke-width="2"/></svg><span></span></div>
            </div>
            <a class="fold" href="#">相关性<svg viewBox="0 0 12 12"><path d="M2 2l4 7 4-7" fill="none" stroke="#106070" stroke-width="2"/></svg></a>
            <a class="fold" href="#">细节<svg viewBox="0 0 12 12"><path d="M2 2l4 7 4-7" fill="none" stroke="#106070" stroke-width="2"/></svg></a>
        </section>

        <section class="stage">
            <div class="docs">
                <a href="#" aria-label="分离"><svg viewBox="0 0 12 14"><use href="#detach"/></svg></a>
                <a class="doc" href="#"><svg class="tool" viewBox="0 0 24 24"><use href="#cutter"/></svg>7.区域轮廓铣_3.prt<svg viewBox="0 0 12 14"><use href="#detach"/></svg><svg viewBox="0 0 12 12"><path d="M2 2l8 8M10 2l-8 8" stroke="#c0b8b0" stroke-width="2"/></svg></a>
            </div>
            <svg class="view" viewBox="220 247 1700 781" preserveAspectRatio="xMinYMin meet">
                <defs>
                    <linearGradient id="shank"><stop offset="0" stop-color="#9e9e9e"/><stop offset=".4" stop-color="#868686"/><stop offset="1" stop-color="#9e9e9e"/></linearGradient>
                    <linearGradient id="flute"><stop offset="0" stop-color="#d6b432"/><stop offset=".25" stop-color="#c0a038"/><stop offset=".5" stop-color="#b09a3e"/><stop offset=".75" stop-color="#c8ac3a"/><stop offset="1" stop-color="#d6b440"/></linearGradient>
                </defs>
                <!-- base plate -->
                <g stroke="#222" stroke-width="1">
                    <path d="M758 622L1434 708L1330 919L655 833z" fill="#a0a0a0"/>
                    <path d="M655 833L1330 919V965L655 879z" fill="#484848"/>
                    <path d="M1330 919L1434 708V754L1330 965z" fill="#666"/>
                </g>
                <!-- toolpath envelope -->
                <path d="M805 510Q805 500 812 493L858 454Q868 445 890 446L945 459Q959 464 959 478V495L1248 574Q1264 579 1264 595V812Q1264 820 1257 828L1238 846Q1226 855 1200 851L822 750Q805 744 805 732z" fill="#17ffff"/>
                <g id="halo" fill="none" stroke="#fff" stroke-width="1"></g>
                <path d="M1050 533L1110 543L1236 577V583z" fill="#fdfdfd"/>
                <path d="M833 522L1211 623L1236 613V820Q1230 838 1211 836L833 735z" fill="#30ecec"/>
                <g id="passes" fill="none" stroke="#0a4a50" stroke-width="1"></g>
                <g id="tail" fill="none" stroke="#6cc8c8" stroke-width="1"></g>
                <!-- cutter -->
                <path d="M975 247H1029V307H975z" fill="url(#shank)"/>
                <path d="M975 307V512L1029 526V307z" fill="url(#flute)"/>
                <path d="M975 499L1023 512V526L975 513z" fill="#7cb84e"/>
                <ellipse cx="1002" cy="307" rx="27" ry="13" fill="#b0ad58" stroke="#222"/>
                <!-- part -->
                <path d="M931 469Q916 478 917 488Q919 495 931 499z" fill="#666" stroke="#222"/>
                <path d="M833 504L884 456L931 469Q917 478 917 487Q918 495 931 500L1236 583L1211 607z" fill="#a0a0a0" stroke="#222"/>
                <path d="M833 504L1211 607V623L833 522z" fill="#484848"/>
                <path d="M1211 607L1236 583V613Q1226 622 1211 623z" fill="#6b6b6b" stroke="#222"/>
                <!-- moves -->
                <path d="M985.500 515V541M1033 532V556" stroke="#1414d0" stroke-width="3" stroke-dasharray="8 8"/>
                <path d="M985.500 543V770Q987 786 1008 798" fill="none" stroke="#e4f0f0" stroke-width="3"/>
                <path d="M1034 556Q1033 572 1008 572" fill="none" stroke="#f4bc28" stroke-width="3"/>
                <!-- MCS axes -->
                <path d="M1041 531V458" stroke="#1030a8" stroke-width="2"/><path d="M1041 441l4 19h-7z" fill="#1030a8"/>
                <path d="M1041 531L1061 491" stroke="#2a8a2a" stroke-width="2"/><path d="M1066 480l-1 14-7-3z" fill="#2a8a2a"/>
                <path d="M1041 531L1122 541" stroke="#b82828" stroke-width="2"/><path d="M1142 543l-21-5v7z" fill="#c82828"/>
                <text x="1020" y="440" fill="#3030b0">ZM</text>
                <text x="1047" y="477" fill="#2a8a3a">YM</text>
                <text x="1126" y="558" fill="#a04848">XM</text>
            </svg>
        </section>
    </main>

    <footer class="status">
        <span>选择刀轨事件以定位刀具，或使用“播放”启动重播</span>
        <output>进给 = 250.000, x = 41.23, y = -4.85, z = -7.57</output>
        <svg viewBox="0 0 24 24"><use href="#fit"/></svg>
    </footer>

    <nav class="taskbar">
        <button aria-label="开始"><svg viewBox="0 0 20 20" fill="#fff"><path d="M2 4l7-1v6H2zM10 3l8-1v7h-8zM2 10h7v6l-7-1zM10 10h8v7l-8-1z"/></svg></button>
        <button aria-label="录屏"><svg viewBox="0 0 20 20"><path d="M3 4h14v12H3z" fill="#f4efe8"/><circle cx="8" cy="11" r="2.500" fill="#d87838"/><path d="M12 7v7M14 6v8" stroke="#b84828"/></svg></button>
        <button aria-label="画图"><svg viewBox="0 0 20 20"><path d="M2 2h16v16H2z" fill="#f0e8c0"/><path d="M2 2h7v6H2z" fill="#f0b868"/><path d="M11 2h7v9z" fill="#88c8e8"/><path d="M2 12h7v6H2z" fill="#98d078"/><path d="M4 3l7 8 6-7" stroke="#c83838" stroke-width="2" fill="none"/><path d="M11 9v8l6-1z" fill="#222"/></svg></button>
        <button aria-label="截图"><svg viewBox="0 0 20 20"><ellipse cx="9" cy="8" rx="7" ry="5" fill="#f8e8e8" stroke="#c84848"/><path d="M4 9l9-3" stroke="#c84848"/><circle cx="13" cy="14" r="2" fill="none" stroke="#3888b8" stroke-width="2"/><path d="M14 10l3 3" stroke="#3888b8" stroke-width="2"/></svg></button>
        <button aria-label="计算器"><svg viewBox="0 0 20 20"><path d="M4 2h12v16H4z" fill="#889aa8"/><path d="M6 4h8v3H6z" fill="#d0ecf4"/><path d="M6 10h8M6 13h8M6 16h8" stroke="#fff" stroke-width="2" stroke-dasharray="2 1"/></svg></button>
        <button class="active" aria-label="NX"><svg viewBox="0 0 20 20"><path d="M3 3l6 3v10l-6-4z" fill="#28a8e0"/><path d="M9 6l6-3v10l-6 4z" fill="#3868d0"/><path d="M4 2h9l-4 7z" fill="#d81838"/><path d="M3 12l6 2 4-4-4-2z" fill="#e8f4fa"/><path d="M7 16c9 2 14-6 10-9" fill="none" stroke="#e8c850" stroke-width="2"/></svg></button>
        <button class="run" aria-label="文件资源管理器"><svg viewBox="0 0 20 20"><path d="M2 3h6l2 2h8v12H2z" fill="#f8d060"/><path d="M5 11h10v6h-3v-3H8v3H5z" fill="#3888c8"/></svg></button>
        <button class="run" aria-label="录屏窗口"><svg viewBox="0 0 20 20"><path d="M3 4h14v12H3z" fill="#f4efe8"/><circle cx="8" cy="11" r="2.500" fill="#d87838"/><path d="M12 7v7M14 6v8" stroke="#b84828"/></svg></button>
        <button class="run" aria-label="演示文稿"><svg viewBox="0 0 20 20"><path d="M10 4h8v12h-8z" fill="#fff" stroke="#c84828"/><path d="M2 3l11-2v18L2 17z" fill="#c84020"/><path d="M6 14V6h2c3 0 3 4 0 4H6" fill="none" stroke="#fff" stroke-width="2"/></svg></button>
        <div class="tray">
            <svg viewBox="0 0 20 20"><path d="M4 13l6-6 6 6" fill="none" stroke="#fff" stroke-width="1.500"/></svg>
            <svg viewBox="0 0 20 20"><path d="M6 7h12v8H6z" fill="none" stroke="#fff"/><path d="M9 9h7v4H9z" fill="#fff"/><path d="M2 4v3M5 4v3M1 7h5v3H1zM3 10v5h3" fill="none" stroke="#fff"/></svg>
            <svg viewBox="0 0 20 20" fill="none" stroke="#fff"><path d="M2 8h3l4-4v12l-4-4H2z"/><path d="M12 8c1 1 1 3 0 4M14 6c2 2 2 6 0 8"/><path d="M16 4c4 3 4 9 0 12" stroke="#789"/></svg>
            <svg viewBox="0 0 20 20" fill="none" stroke="#ccd"><path d="M3 15C3 9 9 4 16 4M6 16c0-5 5-9 10-9M9 16c0-3 3-6 7-6M12 16c0-2 2-3 4-3"/><circle cx="15" cy="15" r="1" fill="#fff"/></svg>
            <span class="ime">A</span>
            <time>21:14</time>
            <svg class="note" viewBox="0 0 20 20"><path d="M2 2h16v13H8l-3 3v-3H2z" fill="#fff"/><path d="M5 6h10M5 9h10M5 12h6" stroke="#22343c"/><circle cx="15" cy="14" r="4" fill="#fff" stroke="#22343c"/></svg>
        </div>
    </nav>

    <!-- toolpath playback dialog -->
    <form class="dialog">
        <header><svg viewBox="0 0 16 16"><use href="#gear"/></svg><h2>刀轨可视化</h2><button type="button" aria-label="关闭"><svg viewBox="0 0 16 16"><path d="M3 3l10 10M13 3L3 13" stroke="#fff" stroke-width="2"/></svg></button></header>
        <div class="list">
            <ul role="listbox" aria-label="刀轨">
                <li role="option" aria-selected="true">GOTO/2.425,-15.765,10.000</li>
                <li role="option">GOTO/2.425,-15.765,4.010</li>
                <li role="option">GOTO/2.332,-15.741,3.035</li>
                <li role="option">GOTO/2.056,-15.672,2.097</li>
                <li role="option">GOTO/1.608,-15.560,1.232</li>
                <li role="option">GOTO/1.005,-15.410,0.474</li>
                <li role="option">GOTO/0.270,-15.226,-0.147</li>
            </ul>
            <div class="vscroll"><svg viewBox="0 0 12 12"><path d="M2 8l4-4 4 4" fill="none" stroke="#333" stroke-width="2"/></svg><span></span><svg viewBox="0 0 12 12"><path d="M2 4l4 4 4-4" fill="none" stroke="#333" stroke-width="2"/></svg></div>
        </div>
        <div class="now"><span>1</span></div>
        <input class="range" type="range" min="1" max="552" value="1" aria-label="刀轨事件">
        <div class="ends"><span>1</span><span>552</span></div>
        <p class="feed">进给率 0.000000</p>
        <div class="modes">
            <button type="button" class="on" disabled>重播</button><button type="button" disabled>3D 动态</button><button type="button" disabled>2D 动态</button>
        </div>
        <div class="pane">
            <h3>显示选项</h3>
            <div class="row"><label for="tool">刀具</label><span class="pick"><select id="tool" disabled><option>刀具</option></select></span></div>
            <label class="check"><input type="checkbox" disabled>2D 除料</label>
            <label class="check"><input type="checkbox" disabled>显示上一个 IPW</label>
            <hr>
            <h3>运动显示</h3>
            <div class="row"><label for="path">刀轨</label><span class="pick all"><select id="path" disabled><option>全部</option></select></span></div>
            <div class="row"><label for="trace">刀具轨迹</label><span class="pick trace"><select id="trace" disabled><option>工具提示</option></select></span></div>
            <div class="row"><label for="count">运动数</label><input id="count" type="text" value="10" disabled></div>
            <label class="check"><input type="checkbox" disabled>在每一层暂停</label>
            <label class="check"><input type="checkbox" disabled>显示刀具接触</label>
            <hr>
            <button type="button" class="gouge" disabled>过切和碰撞设置</button>
        </div>
        <label class="caption" for="anim">动画速度</label>
        <div class="now"><span style="margin-left: 74%">8</span></div>
        <div class="focus"><input id="anim" class="range" type="range" min="1" max="10" value="8"></div>
        <div class="ends"><span>1</span><span>10</span></div>
        <div class="player">
            <button type="button" disabled aria-label="回到起点"><svg viewBox="0 0 24 24"><path d="M2 4v16" stroke="#a09898" stroke-width="2"/><path d="M13 5v14l-9-7zM22 5v14l-9-7z" fill="#a89c9c"/></svg></button>
            <button type="button" disabled aria-label="上一步"><svg viewBox="0 0 24 24"><path d="M7 4v16" stroke="#a09898" stroke-width="2"/><path d="M18 5v14l-9-7z" fill="#a89c9c"/></svg></button>
            <button type="button" disabled aria-label="反向播放"><svg viewBox="0 0 24 24"><path d="M16 5v14l-8-7z" fill="#a89c9c"/></svg></button>
            <button type="button" disabled aria-label="播放"><svg viewBox="0 0 24 24"><path d="M9 5v14l8-7z" fill="#a89c9c"/></svg></button>
            <button type="button" disabled aria-label="下一步"><svg viewBox="0 0 24 24"><path d="M17 4v16" stroke="#a09898" stroke-width="2"/><path d="M6 5v14l9-7z" fill="#a89c9c"/></svg></button>
            <button type="button" disabled aria-label="跳到终点"><svg viewBox="0 0 24 24"><path d="M22 4v16" stroke="#a09898" stroke-width="2"/><path d="M2 5v14l9-7zM11 5v14l9-7z" fill="#a89c9c"/></svg></button>
            <button type="button" class="stop" aria-label="停止"><svg viewBox="0 0 24 24"><path d="M6 6h12v12H6z" fill="#800000"/></svg></button>
        </div>
        <div class="actions"><button type="button" disabled>确定</button><button type="button" disabled>取消</button></div>
    </form>

    <div class="pointer" aria-hidden="true"><svg viewBox="0 0 54 54"><circle cx="27" cy="27" r="27" fill="#e6ea28" opacity=".8"/><path d="M28 28v17l4-3 3 7 3-1-3-7h5z" fill="#fff" stroke="#222"/></svg></div>

    <script src="toolpath.js"></script>
</body>
</html>
```

FILE: styles.css
```css
* {
    box-sizing: border-box;
}
body {
    display: flex;
    flex-direction: column;
    height: 100vh;
    margin: 0;
    overflow: hidden;
    background: #fdfdfd;
    color: #222;
    font-family: "Noto Sans", "Noto Sans CJK SC", sans-serif;
    font-size: 12px;
    line-height: 16px;
}
h1, h2, h3, p, ul {
    margin: 0;
    padding: 0;
    font-size: 12px;
    font-weight: normal;
}
ul {
    list-style: none;
}
a {
    color: inherit;
    text-decoration: none;
}
button, input, select {
    margin: 0;
    padding: 0;
    border: 0;
    background: none;
    color: inherit;
    font: inherit;
}
svg {
    display: block;
    flex: none;
    width: 24px;
    height: 24px;
}
.defs {
    position: absolute;
    width: 0;
    height: 0;
}
.dd {
    flex: none;
    width: 10px;
    height: 4px;
    background: #222;
    clip-path: polygon(1px 0, 9px 0, 5px 4px);
}
.dd.grey {
    background: #aaa;
}
.dd.bar {
    height: 7px;
    clip-path: polygon(1px 0, 9px 0, 9px 1px, 1px 1px, 1px 3px, 9px 3px, 5px 7px, 1px 3px);
}
.sep {
    flex: none;
    width: 1px;
    align-self: stretch;
    margin: 4px 8px;
    background: #ccc;
}
.pick {
    display: flex;
    position: relative;
    border: 1px solid #999;
    background: #fff;
}
.pick select {
    width: 100%;
    padding-left: 4px;
    appearance: none;
}
.pick::after {
    content: "";
    position: absolute;
    top: 50%;
    right: 5px;
    margin-top: -2px;
    border: 4px solid transparent;
    border-top: 5px solid #222;
    border-bottom: 0;
}

/* title bar */
.titlebar {
    display: flex;
    flex: none;
    align-items: center;
    height: 36px;
    font-size: 11px;
}
.titlebar .nx {
    width: 38px;
    padding-left: 3px;
    color: #6f93a3;
    font-size: 22px;
    font-weight: bold;
}
.titlebar .sep {
    margin: 4px 3px;
}
.titlebar button svg {
    width: 20px;
    height: 20px;
}
.titlebar button {
    padding: 0 7px;
}
.titlebar .wide svg, .titlebar .hand svg {
    width: 24px;
    height: 22px;
}
.titlebar .wide {
    padding: 0 5px;
}
.titlebar .hand {
    padding: 0 2px;
}
.titlebar .text {
    display: flex;
    align-items: center;
    gap: 6px;
    padding: 0 4px 0 6px;
}
.titlebar .text svg {
    width: 24px;
    height: 24px;
}
.titlebar .grey {
    color: #aaa;
}
.titlebar .dd {
    margin: 0 2px;
}
.titlebar h1 {
    flex: 1;
    text-align: center;
}
.siemens {
    margin-right: 20px;
    color: #128c86;
    font-size: 14px;
    font-weight: bold;
}
.titlebar .win {
    padding: 0 4px;
}
.titlebar .win svg {
    width: 16px;
    height: 16px;
}

/* ribbon tabs */
.tabs {
    display: flex;
    flex: none;
    align-items: stretch;
    height: 32px;
    padding-right: 11px;
    background: #dadada;
    font-size: 13px;
}
.tabs a {
    padding: 0 13px;
    line-height: 32px;
}
.tabs .file {
    width: 85px;
    margin-right: 2px;
    background: #549eb5;
    color: #fff;
    line-height: 30px;
    text-align: center;
}
.tabs .active {
    border-top: 1px solid #999;
    background: #fdfdfd;
    color: #106070;
}
.tabs .hover {
    background: #a6d2dc;
}
.search {
    display: flex;
    align-items: center;
    align-self: center;
    width: 125px;
    height: 20px;
    margin-left: auto;
    margin-right: 8px;
    border: 1px solid #aaa;
    background: #fff;
    font-size: 11px;
}
.search input {
    flex: 1;
    width: 0;
    padding-left: 2px;
}
.search input::placeholder {
    color: #888;
}
.search svg {
    width: 18px;
    height: 16px;
}
.tabs button {
    width: 38px;
    padding: 0 7px;
}
.tabs .tutor {
    display: flex;
    align-items: center;
    gap: 3px;
    width: auto;
    padding: 0 0 0 8px;
    font-size: 11px;
}

/* ribbon */
.ribbon {
    display: flex;
    flex: none;
    height: 120px;
    padding: 5px 4px 1px 0;
    border-bottom: 1px solid #ccc;
    font-size: 11px;
}
.group {
    display: flex;
    flex-direction: column;
    border-right: 1px solid #ccc;
}
.group.insert {
    width: 222px;
    border: 0;
}
.insert .items {
    padding-left: 9px;
}
.group.operation {
    width: 594px;
    margin-left: 76px;
}
.operation .items {
    justify-content: flex-end;
    padding-right: 1px;
}
.display {
    padding-left: 14px;
}
.display .foot {
    padding-left: 2px;
}
.animate {
    width: 297px;
}
.animate .items {
    padding-left: 12px;
}
.animate .foot {
    padding-left: 0;
}
.piece {
    width: 162px;
}
.curves {
    width: 184px;
}
.curves .items {
    padding-left: 6px;
}
.items {
    display: flex;
    flex: 1;
}
.foot {
    display: flex;
    align-items: center;
    padding: 0 6px 0 16px;
    color: #106070;
}
.insert .foot {
    padding: 0;
}
.foot span {
    flex: 1;
    text-align: center;
}
.big {
    display: flex;
    flex-direction: column;
    align-items: center;
    align-self: flex-start;
    padding: 1px 7px;
    line-height: 16px;
}
.big:disabled {
    color: #b4b4b4;
}
.big > svg, .blank {
    width: 46px;
    height: 48px;
    margin-bottom: 4px;
}
.blank {
    border: 1px solid #bbb;
}
.big .dd {
    margin-top: 4px;
}
.curves .big {
    padding: 1px 6px;
}
.more .box {
    display: flex;
    align-items: center;
    justify-content: center;
    width: 53px;
    height: 50px;
    margin-bottom: 2px;
    border: 1px solid #ccc;
    border-radius: 3px;
}
.big.mid {
    padding: 1px 5px;
}
.big.ipw {
    padding: 1px 0 0 4px;
}
.grid3, .grid2 {
    display: grid;
    grid-template-columns: repeat(3, 48px);
    grid-auto-rows: 32px;
    align-items: start;
    flex: none;
    height: 98px;
}
.grid2 {
    grid-template-columns: 42px 42px;
    justify-items: center;
}
.grid2.narrow {
    grid-template-columns: 36px 36px;
    padding-left: 11px;
}
.grid3 button {
    display: flex;
    align-items: center;
    gap: 8px;
}
.speed {
    width: 77px;
    padding-top: 19px;
    text-align: center;
}
.speed .pick {
    height: 20px;
    margin-bottom: 22px;
}
.ribbon .last {
    align-self: flex-end;
    margin: 0 0 5px auto;
}

/* selection toolbar */
.toolbar {
    display: flex;
    flex: none;
    align-items: center;
    height: 36px;
    padding-right: 4px;
    border-bottom: 1px solid #888;
    font-size: 11px;
}
.toolbar button {
    flex: none;
    padding: 0 6px;
}
.toolbar .menu {
    display: flex;
    align-items: center;
    gap: 2px;
    padding: 0 4px 0 11px;
}
.toolbar .covered {
    width: 322px;
}
.toolbar .scope {
    width: 139px;
    height: 20px;
    margin-right: 6px;
}
.toolbar .on {
    height: 32px;
    padding: 0 5px;
    border: 1px solid #a8d0da;
    background: #cbe5eb;
}
.toolbar .mcs {
    height: 23px;
    padding: 0 5px;
    border: 1px solid #a8d0da;
    background: #cbe5eb;
}
.toolbar .mcs + .sep {
    margin: 4px 6px;
}
.toolbar .last {
    margin-left: auto;
}

/* work area */
main {
    display: flex;
    flex: 1;
    min-height: 0;
}
.resbar {
    display: flex;
    flex: none;
    flex-direction: column;
    width: 32px;
    border-right: 1px solid #aaa;
    background: #dadada;
}
.resbar button {
    flex: none;
    height: 42px;
    padding-left: 6px;
}
.resbar .gear {
    height: 28px;
    margin-bottom: 2px;
    padding-left: 7px;
}
.resbar .gear svg {
    width: 16px;
    height: 16px;
}
.resbar .spaced {
    margin-top: 12px;
}
.resbar .current {
    width: 30px;
    height: 44px;
    margin: -1px 0 -1px 2px;
    padding-left: 4px;
    background: #fdfdfd;
}
.navigator {
    display: flex;
    flex: none;
    flex-direction: column;
    width: 188px;
    padding: 0 9px 5px 6px;
    border-right: 1px solid #888;
}
.navigator h2 {
    padding-left: 5px;
    line-height: 28px;
}
.tree {
    display: flex;
    flex: 1;
    flex-direction: column;
    overflow: hidden;
    border: 1px solid #bbb;
    border-bottom: 4px solid #ccc;
    background: repeating-linear-gradient(#fdfdfd 0, #fdfdfd 19px, #e4e4e4 19px, #e4e4e4 20px, #f8f8f8 20px, #f8f8f8 39px, #e4e4e4 39px, #e4e4e4 40px) 0 21px;
}
.tree table {
    width: 100%;
    border-collapse: collapse;
}
.tree th {
    height: 21px;
    padding: 1px 6px 0;
    border-bottom: 1px solid #ccc;
    background: #eee;
    font-weight: normal;
    text-align: left;
}
.tree td {
    height: 20px;
    padding: 0 4px;
    line-height: 20px;
    white-space: nowrap;
}
.tree td svg {
    display: inline-block;
    width: 16px;
    height: 16px;
    margin-right: 3px;
    vertical-align: middle;
}
.tree .lv1 {
    padding-left: 20px;
}
.tree .lv1::before, .tree .lv2::before {
    content: "";
    display: inline-block;
    width: 10px;
    height: 10px;
    margin-left: -11px;
    border: dotted #999;
    border-width: 1px 0 0 1px;
    vertical-align: -6px;
}
.tree .open::before {
    width: 9px;
    height: 9px;
    margin: 0 6px 0 -15px;
    border: 1px solid #aaa;
    background: linear-gradient(#333, #333) 1px 3px / 5px 1px no-repeat;
    vertical-align: middle;
}
.tree .lv2 {
    padding-left: 39px;
}
.tree .lv2::before {
    border-width: 0 0 1px 1px;
    vertical-align: 3px;
}
.tree .sel::before {
    margin-right: 4px;
}
.tree .sel svg {
    margin-right: 0;
}
.tree .sel .bang {
    width: 8px;
    margin-right: 4px;
}
.tree .sel span {
    display: inline-block;
    width: 80px;
    padding-left: 2px;
    background: #8cc0cf;
}
.hscroll {
    display: flex;
    align-items: center;
    height: 15px;
    margin: auto 0 3px;
    background: #eee;
}
.hscroll svg {
    width: 18px;
    height: 12px;
}
.hscroll span {
    width: 24px;
    height: 15px;
    background: #c8c8c8;
}
.fold {
    display: flex;
    align-items: center;
    justify-content: space-between;
    height: 24px;
    padding: 0 4px 0 7px;
    border-bottom: 2px solid #ccc;
    color: #106070;
    font-size: 14px;
}
.fold svg {
    width: 14px;
    height: 12px;
}
.stage {
    display: flex;
    flex: 1;
    flex-direction: column;
    min-width: 0;
}
.docs {
    display: flex;
    flex: none;
    align-items: center;
    height: 23px;
    padding-left: 283px;
    border-bottom: 2px solid #549eb5;
}
.docs a svg {
    width: 12px;
    height: 14px;
}
.docs .doc {
    display: flex;
    align-items: center;
    gap: 5px;
    height: 21px;
    margin-left: 21px;
    padding: 0 5px;
    background: #549eb5;
    color: #fff;
}
.docs .doc .tool {
    width: 16px;
    height: 18px;
}
.view {
    flex: 1;
    width: 100%;
    min-height: 0;
}
.view text {
    font-size: 13px;
}

/* status and task bars */
.status {
    display: flex;
    flex: none;
    align-items: center;
    height: 23px;
    padding: 0 58px 2px 4px;
    border-top: 1px solid #999;
    font-size: 11px;
    font-weight: bold;
}
.status span {
    flex: 1;
}
.status svg {
    width: 16px;
    height: 16px;
}
.status output {
    flex: none;
    width: 932px;
}
.taskbar {
    display: flex;
    flex: none;
    height: 29px;
    background: #22343c;
}
.taskbar button {
    width: 37px;
    padding: 0 8px;
    border-bottom: 2px solid transparent;
}
.taskbar .active {
    border-color: #76b0e4;
    background: #4a5a62;
}
.taskbar svg {
    width: 20px;
    height: 20px;
}
.taskbar .run {
    width: 29px;
    margin: 0 4px;
    padding: 0 4px;
    border-color: #76b0e4;
}
.tray {
    display: flex;
    align-items: center;
    gap: 4px;
    margin-left: auto;
    padding-right: 22px;
    color: #fff;
}
.tray .ime {
    font-size: 18px;
}
.tray time {
    margin: 0 15px 0 8px;
}

/* playback dialog */
.dialog {
    position: absolute;
    top: 69px;
    left: 176px;
    width: 327px;
    padding-bottom: 10px;
    border-right: 1px solid #ccc;
    border-bottom: 1px solid #ccc;
    background: #eee;
}
.dialog > * {
    margin-left: 9px;
    margin-right: 9px;
}
.dialog header {
    display: flex;
    align-items: center;
    height: 24px;
    margin: 0 0 8px;
    padding: 0 7px 0 6px;
    background: #549eb5;
    color: #fff;
}
.dialog header svg {
    width: 14px;
    height: 14px;
}
.dialog header h2 {
    flex: 1;
    padding-left: 8px;
    font-size: 14px;
}
.list {
    display: flex;
    height: 127px;
    padding: 1px 2px 2px;
    border: 1px solid #999;
    background: #fdfdfd;
}
.list ul {
    flex: 1;
    overflow: hidden;
}
.list li {
    height: 17px;
    padding-left: 1px;
    line-height: 17px;
}
.list li[aria-selected] {
    background: #8cc0cf;
}
.vscroll {
    display: flex;
    flex-direction: column;
    align-items: center;
    width: 16px;
    background: #eee;
}
.vscroll svg {
    width: 10px;
    height: 17px;
}
.vscroll span {
    width: 16px;
    height: 69px;
    margin-bottom: auto;
    background: #c8c8c8;
}
.now {
    height: 16px;
    margin-top: 3px;
    padding-left: 9px;
}
.range {
    display: block;
    width: 294px;
    height: 19px;
    margin: 5px 16px 5px;
    appearance: none;
}
.range::-webkit-slider-runnable-track {
    height: 4px;
    background: #a8a8a8;
}
.range::-webkit-slider-thumb {
    width: 9px;
    height: 19px;
    margin-top: -8px;
    border: 1px solid #444;
    background: #549eb5;
    appearance: none;
}
.ends {
    display: flex;
    justify-content: space-between;
    padding-left: 5px;
}
.feed {
    margin-top: 7px;
}
.modes {
    display: flex;
    align-items: flex-end;
    height: 34px;
}
.modes button {
    width: 59px;
    height: 28px;
    border: 1px solid #999;
    border-bottom: 0;
    border-left: 0;
    color: #aaa;
}
.modes .on {
    width: 56px;
    height: 30px;
    border-left: 1px solid #bbb;
    border-top-color: #bbb;
}
.pane {
    height: 452px;
    padding: 4px 6px;
    border: 1px solid #bbb;
    background: #fdfdfd;
    color: #999;
}
.pane h3 {
    color: #222;
    line-height: 20px;
}
.pane .row {
    display: flex;
    align-items: center;
    justify-content: space-between;
    margin-top: 3px;
}
.pane .pick {
    width: 51px;
    height: 25px;
    border-color: #ccc;
    color: #777;
}
.pane .pick::after {
    border-top-color: #999;
}
.pane select {
    opacity: 1;
}
.pane .all {
    width: 135px;
}
.pane .trace {
    width: 75px;
}
.pane .row input {
    width: 82px;
    height: 23px;
    padding-right: 6px;
    border: 1px solid #ccc;
    color: #777;
    font-size: 14px;
    text-align: right;
}
.check {
    display: flex;
    align-items: center;
    gap: 5px;
    height: 23px;
}
.check input {
    width: 13px;
    height: 13px;
    border: 1px solid #bbb;
    appearance: none;
}
.pane hr {
    height: 1px;
    margin: 1px 0 3px;
    border: 0;
    background: #ccc;
}
.gouge {
    width: 100%;
    height: 29px;
    border: 1px solid #bbb;
}
.caption {
    display: block;
    margin-top: 6px;
    margin-bottom: 6px;
}
.focus {
    height: 25px;
    margin-top: 1px;
    margin-bottom: 1px;
    padding-top: 2px;
    border: 1px dotted #000;
}
.focus .range {
    width: 294px;
    margin: 0 6px;
}
.player {
    display: flex;
    justify-content: center;
    gap: 2px;
    margin-top: 5px;
}
.player button {
    width: 32px;
    height: 32px;
    padding: 0 4px;
    border: 1px solid #ccc;
}
.player svg {
    width: 22px;
    height: 22px;
}
.player .stop {
    border-color: #999;
}
.actions {
    display: flex;
    justify-content: flex-end;
    gap: 5px;
    margin-top: 12px;
    padding-right: 6px;
}
.actions button {
    width: 54px;
    height: 25px;
    border: 1px solid #aaa;
    color: #aaa;
}
.pointer {
    position: absolute;
    top: 28px;
    left: 418px;
    pointer-events: none;
}
.pointer svg {
    width: 54px;
    height: 54px;
}
```

FILE: toolpath.js
```js
// draws the contour passes of the area milling operation
function addPath(id, d) {
    const path = document.createElementNS("http://www.w3.org/2000/svg", "path");
    path.setAttribute("d", d);
    document.getElementById(id).appendChild(path);
}

for (let i = 0; i < 47; i++) {
    const y = 526 + i * 4.5;
    addPath("passes", `M833 ${y}L1190 ${y + 97}Q1224 ${y + 106} 1236 ${y + 88}`);
}

// widening lower levels
for (let i = 1; i < 5; i++) {
    const y = 733 + i * 3;
    const s = i * 4;
    addPath("tail", `M${833 - s} ${y - 24 + s}Q${824 - s} ${y} 833 ${y}L1195 ${y + 97}Q1222 ${y + 104} ${1236 + i * 2} ${y + 88}L${1244 + s} ${y + 72}`);
}

// gaps between the upper levels, seen behind the part
for (let i = 0; i < 5; i++) {
    const s = i * 4;
    addPath("halo", `M${815 + s} ${508 - i}L${864 + i * 3} ${459 + i}Q874 ${452 + i} 892 ${453 + i}L934 ${463 + i}`);
    addPath("halo", `M931 ${470 + i * 5}L${955 - i * 2} ${477 + i * 5}`);
    addPath("halo", `M1236 ${582 + i * 6}L${1256 - s} ${587 + i * 5}`);
}
for (let i = 0; i < 3; i++) {
    addPath("halo", `M${970 + i * 10} ${504 + i * 4}L1230 ${574 + i * 3}Q1246 ${579 + i * 3} 1252 ${588 + i * 3}`);
}
```
